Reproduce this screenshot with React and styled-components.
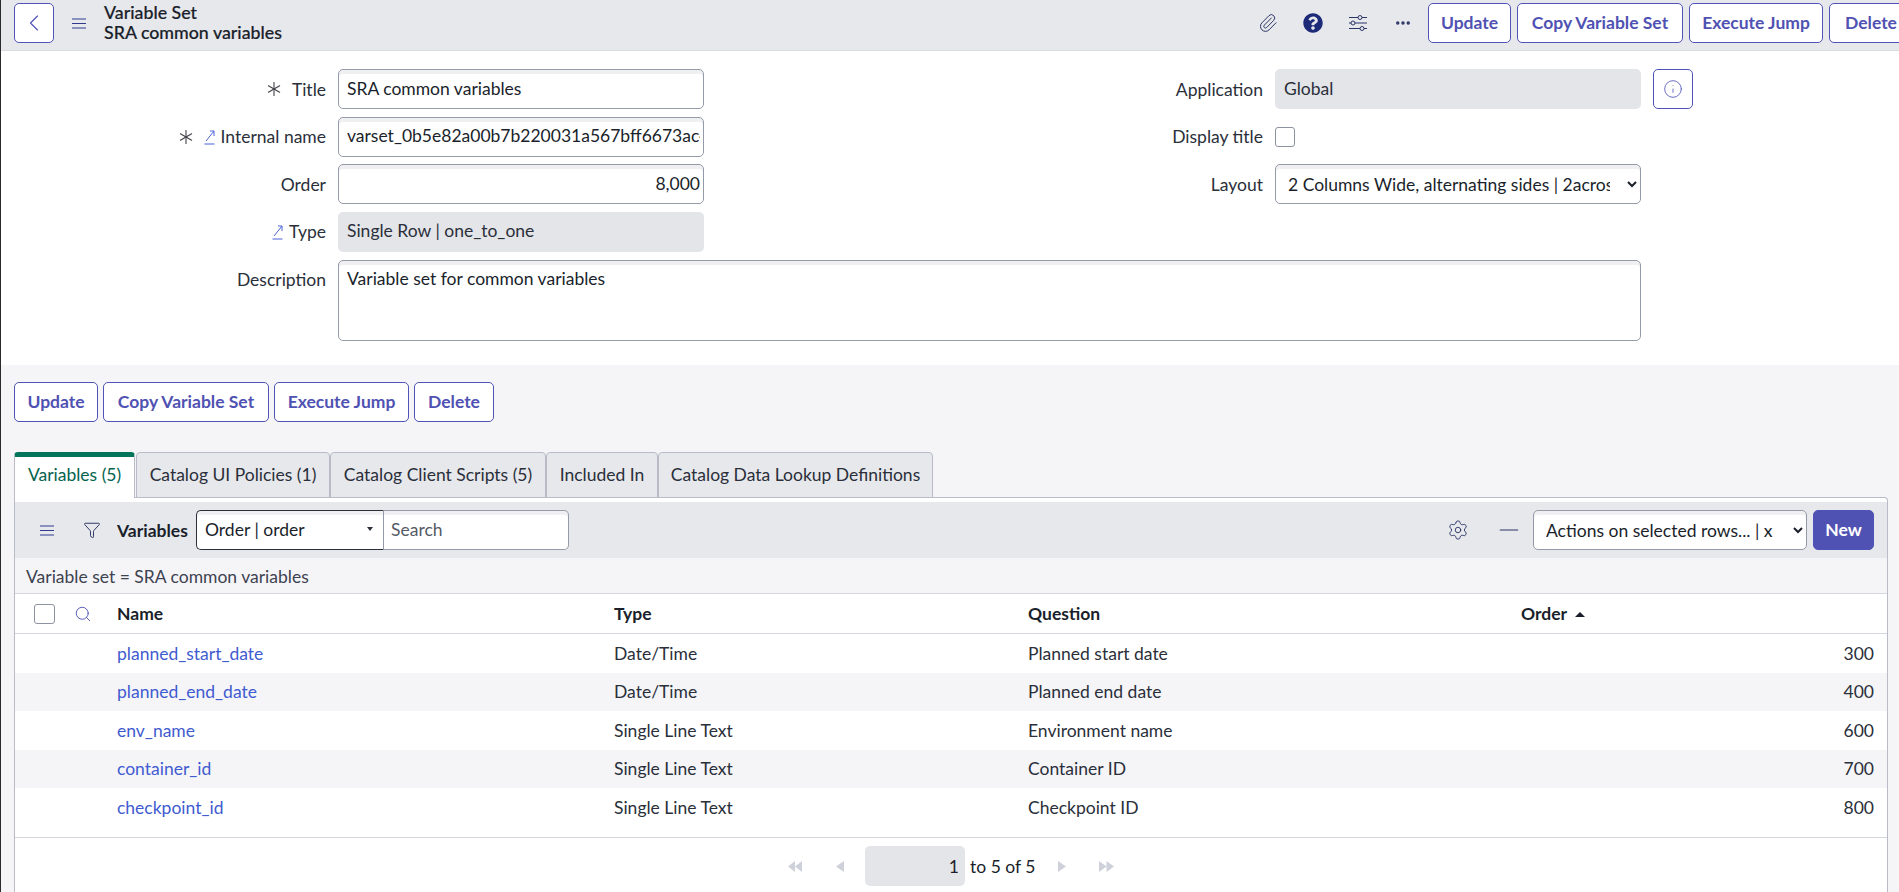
import React from "react";
import styled, { createGlobalStyle } from "styled-components";
import { ChevronLeft, Paperclip, Ellipsis, Info, Asterisk, Filter, Settings, Minus, Search } from "lucide-react";
import { FaQuestionCircle } from "react-icons/fa";

const GlobalStyle = createGlobalStyle`
  html, body { margin: 0; padding: 0; height: 100%; overflow: hidden; }
  body {
    font-family: Lato, "Liberation Sans", sans-serif;
    font-size: 17.5px;
    color: #1a1f2b;
    background: #f5f5f8;
  }
  * { box-sizing: border-box; }
`;

const Page = styled.div`
  height: 892px;
  overflow: hidden;
  border-left: 1px solid #2a2a2a;
`;

// Top header
const Header = styled.header`
  display: flex;
  align-items: center;
  height: 51px;
  padding: 0 0 4px 13px;
  background: #e7e8ec;
  border-bottom: 1px solid #d8dae0;
  overflow: hidden;
`;

const BackButton = styled.button`
  flex: none;
  display: flex;
  align-items: center;
  justify-content: center;
  width: 40px;
  height: 40px;
  padding: 0;
  border: 1px solid #5053b8;
  border-radius: 5px;
  background: #fff;
  color: #5053b8;
`;

const MenuGlyph = styled.svg`
  flex: none;
  display: block;
  width: 14px;
  height: 11px;
  stroke: #2f3a8f;
  stroke-width: 1;
`;

const HeaderMenu = styled.div`
  flex: none;
  margin-left: 18px;
`;

const HeaderTitle = styled.div`
  flex: none;
  width: 1141px;
  margin-left: 18px;
  margin-top: -3px;
  font-size: 17.8px;
  font-weight: 500;
  line-height: 20px;
  color: #1a1f2b;
  -webkit-text-stroke: 0.2px #1a1f2b;
`;

const HeaderIcons = styled.div`
  flex: none;
  display: flex;
  align-items: center;
  width: 183px;
`;

const IconSlot = styled.span`
  display: flex;
  align-items: center;
  justify-content: center;
  width: 45px;
  color: ${(p) => p.$color || "#2b3566"};
`;

const SliderGlyph = styled.svg`
  display: block;
  width: 18px;
  height: 16px;
  fill: #e7e8ec;
  stroke: #2b3566;
  stroke-width: 1;
`;

const ButtonRow = styled.div`
  flex: none;
  display: flex;
  gap: ${(p) => p.$gap || 5}px;
`;

const Button = styled.button`
  flex: none;
  height: 40px;
  width: ${(p) => p.$w}px;
  padding: 0 0 2px;
  border: 1px solid #5053b8;
  border-radius: 5px;
  background: #fff;
  color: #4f52b2;
  font-family: inherit;
  font-size: 17.5px;
  font-weight: 700;
  text-align: center;
  white-space: nowrap;
`;

// Form
const FormArea = styled.section`
  background: #fff;
  height: 314px;
  padding-top: 18px;
`;

const FormGrid = styled.div`
  display: grid;
  grid-template-columns: 825px 1fr;
`;

const FormColumn = styled.div`
  display: flex;
  flex-direction: column;
  gap: 7.5px;
`;

const FormRow = styled.div`
  display: grid;
  grid-template-columns: ${(p) => p.$label}px 366px auto;
  column-gap: 12px;
  align-items: center;
  min-height: 40px;
`;

const Label = styled.label`
  display: flex;
  align-items: center;
  justify-content: flex-end;
  gap: 5px;
  color: #2a2f3a;
  white-space: nowrap;
`;

const RefLink = styled.svg`
  display: block;
  width: 12px;
  height: 16px;
  stroke: #4a63d8;
  fill: none;
  stroke-width: 1;
`;

const Required = styled.span`
  display: flex;
  color: #3f4046;
`;

const TextInput = styled.input`
  width: 100%;
  height: 40px;
  padding: 0 3px 2px 8px;
  border: 1px solid #959aa8;
  border-radius: 5px;
  background: #fff;
  box-shadow: inset 0 4px 0 #f0f0f2;
  font-family: inherit;
  font-size: 17.5px;
  color: #1a1f2b;
  text-align: ${(p) => (p.$right ? "right" : "left")};
  outline: none;
`;

const ReadOnly = styled.div`
  display: flex;
  align-items: center;
  height: 40px;
  padding: 0 9px 2px;
  border-radius: 5px;
  background: #e4e5e9;
  color: #2a2f3a;
`;

const SelectField = styled.select`
  width: 100%;
  height: 40px;
  padding: 0 14px 0 8px;
  border: 1px solid #959aa8;
  border-radius: 5px;
  background: #fff;
  box-shadow: inset 0 4px 0 #f0f0f2;
  font-family: inherit;
  font-size: 17.5px;
  color: #1a1f2b;
`;

const Checkbox = styled.span`
  display: block;
  width: 20px;
  height: 20px;
  border: 1px solid #8d92a0;
  border-radius: 3px;
  background: #fff;
`;

const InfoButton = styled.button`
  display: flex;
  align-items: center;
  justify-content: center;
  width: 40px;
  height: 40px;
  margin-left: 0;
  padding: 0;
  border: 1px solid #5053b8;
  border-radius: 5px;
  background: #fff;
  color: #5053b8;
`;

const DescriptionRow = styled.div`
  display: grid;
  grid-template-columns: 325px 1303px;
  column-gap: 12px;
  margin-top: 8px;
`;

const DescriptionLabel = styled(Label)`
  align-items: flex-start;
  padding-top: 9px;
`;

const TextArea = styled.div`
  height: 81px;
  padding: 7px 8px;
  border: 1px solid #959aa8;
  border-radius: 5px;
  box-shadow: inset 0 4px 0 #f0f0f2;
`;

// Lower part
const Lower = styled.section`
  padding: 17px 11px 0 13px;
`;

const TabStrip = styled.div`
  display: flex;
  height: 46px;
  margin-top: 30px;
`;

const Tab = styled.div`
  flex: none;
  display: flex;
  align-items: center;
  justify-content: center;
  width: ${(p) => p.$w}px;
  margin-right: ${(p) => (p.$active ? 1 : 0)}px;
  height: 46px;
  padding-bottom: ${(p) => (p.$active ? 6 : 2)}px;
  border: 1px solid #b9bcc8;
  border-bottom: ${(p) => (p.$active ? "none" : "1px solid #b9bcc8")};
  border-top: ${(p) => (p.$active ? "5px solid #04755c" : "1px solid #b9bcc8")};
  border-radius: 4px 4px 0 0;
  background: ${(p) => (p.$active ? "#fff" : "#e7e8ec")};
  color: ${(p) => (p.$active ? "#04634e" : "#2a2f3a")};
  position: relative;
  z-index: 1;
`;

const Panel = styled.div`
  margin-top: -1px;
  padding-top: 4px;
  background: #fff;
  border: 1px solid #b9bcc8;
  border-bottom: none;
  border-radius: 0 4px 0 0;
  height: 400px;
`;

const Toolbar = styled.div`
  display: flex;
  align-items: center;
  height: 56px;
  background: #e7e8ec;
  padding-left: 25px;
`;

const ToolIcon = styled.span`
  display: flex;
  color: #2b3566;
  margin-right: ${(p) => p.$mr || 0}px;
`;

const ToolTitle = styled.span`
  flex: none;
  width: 79px;
  font-weight: 700;
`;

const SearchGroup = styled.div`
  display: flex;
  height: 40px;
`;

const OrderSelect = styled.div`
  display: flex;
  align-items: center;
  justify-content: space-between;
  width: 188px;
  padding: 0 10px 2px 8px;
  border: 1px solid #2a2f3a;
  border-right: 1px solid #959aa8;
  border-radius: 5px 0 0 5px;
  background: #fff;
  box-shadow: inset 0 4px 0 #f0f0f2;
`;

const Caret = styled.span`
  width: 0;
  height: 0;
  border-left: 3.5px solid transparent;
  border-right: 3.5px solid transparent;
  border-top: 4px solid #2a2f3a;
`;

const SearchBox = styled.div`
  display: flex;
  align-items: center;
  width: 185px;
  padding: 0 7px 2px;
  border: 1px solid #959aa8;
  border-left: none;
  border-radius: 0 5px 5px 0;
  background: #fff;
  box-shadow: inset 0 4px 0 #f0f0f2;
  color: #555a66;
`;

const ToolRight = styled.div`
  display: flex;
  align-items: center;
  margin-left: auto;
  padding-right: 13px;
`;

const ActionSelect = styled(SelectField)`
  width: 274px;
  margin-right: 6px;
  padding: 0 2px 0 8px;
`;

const NewButton = styled(Button)`
  background: #4f52b2;
  color: #fff;
`;

const FilterBar = styled.div`
  display: flex;
  align-items: center;
  height: 36px;
  padding: 2px 0 0 11px;
  background: #f5f5f8;
  border-bottom: 1px solid #d5d7de;
  color: #3d4250;
`;

const columns = "102px 497px 414px 493px 1fr";

const HeadRow = styled.div`
  display: grid;
  grid-template-columns: ${columns};
  align-items: center;
  height: 40px;
  border-bottom: 1px solid #d5d7de;
  font-weight: 700;
`;

const HeadTools = styled.div`
  display: flex;
  align-items: center;
  gap: 19px;
  padding-left: 19px;
  color: #4a4eb8;
`;

const HeadCheck = styled(Checkbox)`
  width: 21px;
`;

const SortArrow = styled.span`
  display: inline-block;
  width: 0;
  height: 0;
  margin-left: 8px;
  vertical-align: 3px;
  border-left: 5px solid transparent;
  border-right: 5px solid transparent;
  border-bottom: 5px solid #1a1f2b;
`;

const Row = styled.div`
  display: grid;
  grid-template-columns: ${columns};
  align-items: center;
  height: 38.5px;
  background: ${(p) => (p.$alt ? "#f5f5f8" : "#fff")};
  color: #2a2f3a;
`;

const NameLink = styled.a`
  color: #3f5bd0;
`;

const NumberCell = styled.div`
  text-align: right;
  padding-right: 13px;
`;

const Pager = styled.div`
  display: flex;
  align-items: center;
  height: 55px;
  margin-top: 10.5px;
  border-top: 1px solid #d5d7de;
  padding: 2px 0 0 773px;
`;

const PagerGlyph = styled.svg`
  flex: none;
  display: block;
  height: 11px;
  width: ${(p) => p.$w}px;
  fill: #cfd1da;
  margin-right: ${(p) => p.$mr || 0}px;
`;

const PageInput = styled.div`
  flex: none;
  display: flex;
  align-items: center;
  justify-content: flex-end;
  width: 100px;
  height: 40px;
  padding-right: 6px;
  margin-right: 5px;
  border-radius: 5px;
  background: #e4e5e9;
`;

const PageText = styled.span`
  flex: none;
  width: 88px;
`;

const rows = [
  ["planned_start_date", "Date/Time", "Planned start date", "300"],
  ["planned_end_date", "Date/Time", "Planned end date", "400"],
  ["env_name", "Single Line Text", "Environment name", "600"],
  ["container_id", "Single Line Text", "Container ID", "700"],
  ["checkpoint_id", "Single Line Text", "Checkpoint ID", "800"],
];

const Hamburger = () => (
  <MenuGlyph viewBox="0 0 14 11">
    <path d="M0 1h14M0 5.5h14M0 10h14" />
  </MenuGlyph>
);

const Sliders = () => (
  <SliderGlyph viewBox="0 0 18 16">
    <path d="M0 2.5h18M0 8h18M0 13.5h18" />
    <circle cx="11" cy="2.5" r="2" />
    <circle cx="4" cy="8" r="2" />
    <circle cx="13" cy="13.5" r="2" />
  </SliderGlyph>
);

const ExternalArrow = () => (
  <RefLink viewBox="0 0 12 16">
    <path d="M2 12 L10 2 M6 2 h4 v5 M0.5 15 h10" />
  </RefLink>
);

const Star = () => (
  <Required>
    <Asterisk size={26} strokeWidth={1} />
  </Required>
);

const ActionButtons = ({ gap, widths }) => (
  <ButtonRow $gap={gap}>
    <Button $w={widths[0]}>Update</Button>
    <Button $w={widths[1]}>Copy Variable Set</Button>
    <Button $w={widths[2]}>Execute Jump</Button>
    <Button $w={widths[3]}>Delete</Button>
  </ButtonRow>
);

export default function App() {
  return (
    <Page>
      <GlobalStyle />
      <Header>
        <BackButton>
          <ChevronLeft size={28} strokeWidth={1} />
        </BackButton>
        <HeaderMenu>
          <Hamburger />
        </HeaderMenu>
        <HeaderTitle>
          <div>Variable Set</div>
          <div>SRA common variables</div>
        </HeaderTitle>
        <HeaderIcons>
          <IconSlot>
            <Paperclip size={20} strokeWidth={1.2} />
          </IconSlot>
          <IconSlot $color="#1c2a78">
            <FaQuestionCircle size={20} />
          </IconSlot>
          <IconSlot>
            <Sliders />
          </IconSlot>
          <IconSlot>
            <Ellipsis size={18} strokeWidth={2.6} />
          </IconSlot>
        </HeaderIcons>
        <ActionButtons gap={6} widths={[83, 166, 134, 84]} />
      </Header>

      <FormArea>
        <FormGrid>
          <FormColumn>
            <FormRow $label={325}>
              <Label>
                <Star />
                Title
              </Label>
              <TextInput readOnly value="SRA common variables" />
            </FormRow>
            <FormRow $label={325}>
              <Label>
                <Star />
                <ExternalArrow />
                Internal name
              </Label>
              <TextInput readOnly value="varset_0b5e82a00b7b220031a567bff6673ac4" />
            </FormRow>
            <FormRow $label={325}>
              <Label>Order</Label>
              <TextInput readOnly $right value="8,000" />
            </FormRow>
            <FormRow $label={325}>
              <Label>
                <ExternalArrow />
                Type
              </Label>
              <ReadOnly>Single Row | one_to_one</ReadOnly>
            </FormRow>
          </FormColumn>
          <FormColumn>
            <FormRow $label={437}>
              <Label>Application</Label>
              <ReadOnly>Global</ReadOnly>
              <InfoButton>
                <Info size={20} strokeWidth={1} />
              </InfoButton>
            </FormRow>
            <FormRow $label={437}>
              <Label>Display title</Label>
              <Checkbox />
            </FormRow>
            <FormRow $label={437}>
              <Label>Layout</Label>
              <SelectField defaultValue="2across">
                <option value="2across">2 Columns Wide, alternating sides | 2across</option>
              </SelectField>
            </FormRow>
          </FormColumn>
        </FormGrid>
        <DescriptionRow>
          <DescriptionLabel>Description</DescriptionLabel>
          <TextArea>Variable set for common variables</TextArea>
        </DescriptionRow>
      </FormArea>

      <Lower>
        <ActionButtons gap={5} widths={[84, 166, 135, 80]} />
        <TabStrip>
          <Tab $active $w={121}>Variables (5)</Tab>
          <Tab $w={194}>Catalog UI Policies (1)</Tab>
          <Tab $w={216}>Catalog Client Scripts (5)</Tab>
          <Tab $w={112}>Included In</Tab>
          <Tab $w={275}>Catalog Data Lookup Definitions</Tab>
        </TabStrip>
        <Panel>
          <Toolbar>
            <ToolIcon $mr={29}>
              <Hamburger />
            </ToolIcon>
            <ToolIcon $mr={16}>
              <Filter size={18} strokeWidth={1.3} />
            </ToolIcon>
            <ToolTitle>Variables</ToolTitle>
            <SearchGroup>
              <OrderSelect>
                Order | order
                <Caret />
              </OrderSelect>
              <SearchBox>Search</SearchBox>
            </SearchGroup>
            <ToolRight>
              <ToolIcon $mr={25}>
                <Settings size={22} strokeWidth={1} />
              </ToolIcon>
              <ToolIcon $mr={9}>
                <Minus size={30} strokeWidth={0.9} />
              </ToolIcon>
              <ActionSelect defaultValue="x">
                <option value="x">Actions on selected rows... | x</option>
              </ActionSelect>
              <NewButton $w={61}>New</NewButton>
            </ToolRight>
          </Toolbar>
          <FilterBar>Variable set = SRA common variables</FilterBar>
          <HeadRow>
            <HeadTools>
              <HeadCheck />
              <Search size={18} strokeWidth={1.2} />
            </HeadTools>
            <div>Name</div>
            <div>Type</div>
            <div>Question</div>
            <div>
              Order
              <SortArrow />
            </div>
          </HeadRow>
          {rows.map((r, i) => (
            <Row key={r[0]} $alt={i % 2 === 1}>
              <div />
              <div>
                <NameLink>{r[0]}</NameLink>
              </div>
              <div>{r[1]}</div>
              <div>{r[2]}</div>
              <NumberCell>{r[3]}</NumberCell>
            </Row>
          ))}
          <Pager>
            <PagerGlyph $w={14} $mr={34} viewBox="0 0 16 12" preserveAspectRatio="none">
              <path d="M8 0v12L0 6zM16 0v12L8 6z" />
            </PagerGlyph>
            <PagerGlyph $w={8} $mr={21} viewBox="0 0 8 12" preserveAspectRatio="none">
              <path d="M8 0v12L0 6z" />
            </PagerGlyph>
            <PageInput>1</PageInput>
            <PageText>to 5 of 5</PageText>
            <PagerGlyph $w={8} $mr={33} viewBox="0 0 8 12" preserveAspectRatio="none">
              <path d="M0 0v12l8-6z" />
            </PagerGlyph>
            <PagerGlyph $w={15} viewBox="0 0 16 12" preserveAspectRatio="none">
              <path d="M0 0v12l8-6zM8 0v12l8-6z" />
            </PagerGlyph>
          </Pager>
        </Panel>
      </Lower>
    </Page>
  );
}
